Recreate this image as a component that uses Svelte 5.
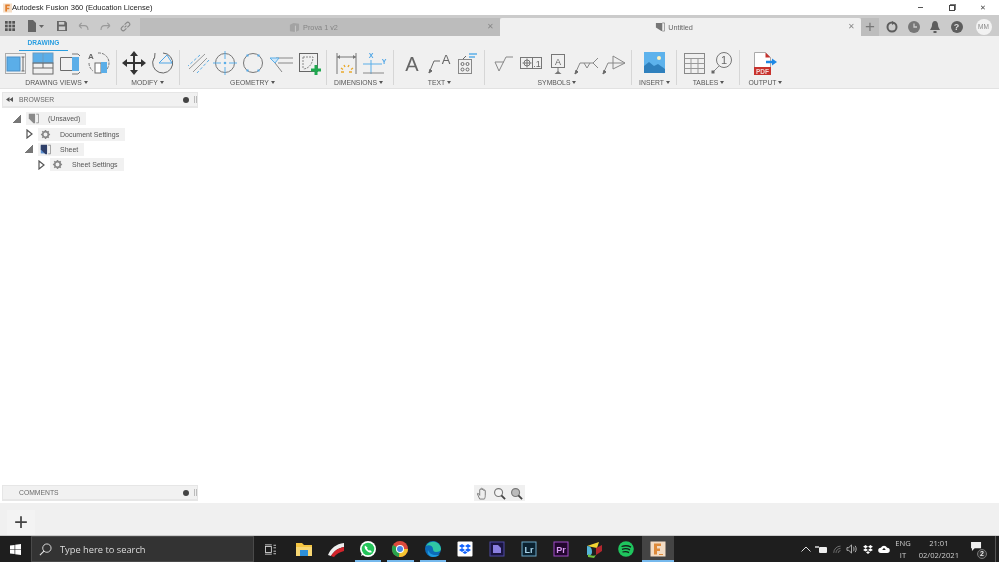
<script>
  const groups = [
    { label: 'DRAWING VIEWS', icons: ['base', 'proj', 'sect', 'detail'], cls: 'g-views' },
    { label: 'MODIFY', icons: ['move', 'rotate'], cls: 'g-modify' },
    { label: 'GEOMETRY', icons: ['center', 'cmark', 'circle', 'edge', 'sketch'], cls: 'g-geom' },
    { label: 'DIMENSIONS', icons: ['dim', 'ord'], cls: 'g-dim' },
    { label: 'TEXT', icons: ['a', 'leader', 'note'], cls: 'g-text' },
    { label: 'SYMBOLS', icons: ['surface', 'fcf', 'datum', 'weld', 'taper'], cls: 'g-sym' },
    { label: 'INSERT', icons: ['image'], cls: 'g-ins' },
    { label: 'TABLES', icons: ['table', 'balloon'], cls: 'g-tab' },
    { label: 'OUTPUT', icons: ['pdf'], cls: 'g-out' }
  ];
  const apps = ['folder', 'flag', 'whatsapp', 'chrome', 'edge', 'dropbox', 'inv', 'lr', 'pr', 'multi', 'spotify', 'fusion'];
  const running = ['whatsapp', 'chrome', 'edge'];
</script>

{#snippet gear()}
  <svg class="tree-ic" viewBox="0 0 14 14" width="11" height="11">
    <circle cx="7" cy="7" r="3.6" fill="none" stroke="#888" stroke-width="2.2"/>
    <path d="M7 1.200v2.200M7 10.600v2.200M1.200 7h2.200M10.600 7h2.200M2.900 2.900l1.600 1.600M9.500 9.500l1.600 1.600M2.900 11.100l1.600-1.600M9.500 4.500l1.600-1.600" stroke="#888" stroke-width="1.800"/>
  </svg>
{/snippet}

{#snippet docIcon(blue)}
  <svg class="tree-ic" viewBox="0 0 14 14" width="11" height="11">
    {#if blue}<rect x="1" y="2" width="6" height="10" fill="#5b8fd0"/>{/if}
    <path d="M1 1h7l1 0v12H7L1 7z" fill={blue ? '#30406a' : '#8a8a8a'}/>
    <path d="M10.500 1.500h3v11h-3" fill="none" stroke="#888" stroke-width="1"/>
  </svg>
{/snippet}

{#snippet closedTri()}
  <svg class="closed" viewBox="0 0 7 10" width="7" height="10"><path d="M1 1l5 4-5 4z" fill="#fff" stroke="#555" stroke-width="1.200"/></svg>
{/snippet}

{#snippet tool(n)}
  <svg class="tool" viewBox="0 0 28 28" width="28" height="28" fill="none" stroke="#6b6b6b" stroke-width="1">
    {#if n === 'base'}
      <rect x="4.500" y="4.500" width="20" height="20" stroke-dasharray="1 1" stroke="#666"/>
      <rect x="6" y="8" width="13" height="14" fill="#5baee8" stroke="#4a90c8"/>
      <path d="M22 8v14M20.500 8h3M20.500 22h3" stroke="#666"/>
    {:else if n === 'proj'}
      <rect x="4" y="4" width="20" height="10" fill="#5baee8" stroke="#6d9cc0"/>
      <path d="M14 4v10" stroke="#6d9cc0"/>
      <rect x="4" y="14" width="20" height="11"/>
      <path d="M4 19h20M14 14v5"/>
    {:else if n === 'sect'}
      <path d="M15 8.500H3.500v13H15"/>
      <rect x="15" y="8" width="7" height="14" fill="#5baee8" stroke="none"/>
      <path d="M15 5h6l2 2M15 25h6l2-2" stroke="#777"/>
    {:else if n === 'detail'}
      <text x="3" y="10" class="ic-a">A</text>
      <path d="M13 4a10 10 0 0 1 11 10 10 10 0 0 1-4 8M4 14a10 10 0 0 0 4 8" stroke="#777" stroke-dasharray="3 1"/>
      <rect x="10" y="14" width="6" height="10" fill="#fff"/>
      <rect x="16" y="13" width="6" height="11" fill="#5baee8" stroke="none"/>
    {:else if n === 'move'}
      <path d="M14 4v20M4 14h20" stroke="#333" stroke-width="2"/>
      <path d="M14 2l4 5h-8zM14 26l4-5h-8zM2 14l5-4v8zM26 14l-5-4v8z" fill="#333" stroke="none"/>
    {:else if n === 'rotate'}
      <path d="M15 4a10 10 0 1 1-9 5" stroke="#666"/>
      <path d="M7 4l-.5 5.500" stroke="#666"/>
      <path d="M11 14h13l-5-8z" stroke="#4ea5e6" fill="none"/>
    {:else if n === 'center'}
      <path d="M22 5L6 20M24 9L10 23" stroke="#999"/>
      <path d="M17 6L5 17M26 11L14 24" stroke="#5baee8" stroke-dasharray="3 2"/>
    {:else if n === 'cmark'}
      <circle cx="14" cy="14" r="9.500" stroke="#777"/>
      <path d="M14 2v8M14 18v8M2 14h8M18 14h8" stroke="#5baee8"/>
      <circle cx="14" cy="14" r="1.300" fill="#5baee8" stroke="none"/>
    {:else if n === 'circle'}
      <circle cx="14" cy="14" r="9.500" stroke="#777"/>
      <path d="M7.500 6.500h2M18.500 6.500h2M7.500 21.500h2M18.500 21.500h2" stroke="#4ea5e6" stroke-width="2"/>
    {:else if n === 'edge'}
      <path d="M9 9h17M11 14h15" stroke="#888"/>
      <path d="M3 9h9l-4 5z" fill="#cfe6f8" stroke="#5baee8"/>
      <path d="M8 14l7 9" stroke="#888"/>
    {:else if n === 'sketch'}
      <rect x="4.500" y="4.500" width="18" height="18" stroke="#666"/>
      <path d="M8 8v12M8 8h10c0 6-4 12-10 12" stroke="#888" stroke-dasharray="2 1"/>
      <path d="M21 16v10M16 21h10" stroke="#1fa84f" stroke-width="3"/>
    {:else if n === 'dim'}
      <path d="M5 4v21M24 4v21M5 8h19" stroke="#777"/>
      <path d="M5 8l3-2v4zM24 8l-3-2v4z" fill="#777" stroke="none"/>
      <path d="M9 19l2 1.500M19 20.500l2-1.500M12 16l1 2M17 16l-1 2M9 23h3M17 23h3" stroke="#e9a92c" stroke-width="1.400"/>
    {:else if n === 'ord'}
      <path d="M11 11v14M3 15h19" stroke="#5baee8"/>
      <path d="M3 24h21" stroke="#888"/>
      <text x="11" y="9" class="ic-xy">X</text>
      <text x="24" y="15" class="ic-xy">Y</text>
    {:else if n === 'a'}
      <text x="14" y="22" class="ic-big">A</text>
    {:else if n === 'leader'}
      <path d="M3 24L8 12h6" stroke="#666"/>
      <path d="M3 24l1-4 2 2z" fill="#666"/>
      <text x="20" y="15" class="ic-mid">A</text>
    {:else if n === 'note'}
      <rect x="4.500" y="10.500" width="13" height="14" stroke="#888"/>
      <circle cx="8.500" cy="15" r="1.500"/><circle cx="13.500" cy="15" r="1.500"/>
      <circle cx="8.500" cy="20.500" r="1.500"/><circle cx="13.500" cy="20.500" r="1.500"/>
      <path d="M15 5h8M15 8h6" stroke="#5baee8" stroke-width="1.500"/>
      <path d="M9 10l3-3" stroke="#666"/>
    {:else if n === 'surface'}
      <path d="M6 13h9M6 13l4 9 7-14h7" stroke="#888"/>
    {:else if n === 'fcf'}
      <rect x="3.500" y="8.500" width="21" height="11" stroke="#777"/>
      <path d="M15.500 8.500v11" stroke="#777"/>
      <circle cx="10" cy="14" r="3" stroke="#777"/>
      <path d="M5.500 14h9M10 9.500v9" stroke="#777"/>
      <text x="20" y="17.500" class="ic-sm">.1</text>
    {:else if n === 'datum'}
      <rect x="6.500" y="5.500" width="13" height="13" stroke="#777"/>
      <text x="13" y="16" class="ic-sm">A</text>
      <path d="M13 18v5" stroke="#777"/>
      <path d="M9.500 25h7l-3.500-3z" fill="#777" stroke="none"/>
    {:else if n === 'weld'}
      <path d="M2 25L7 14h13l5-5M20 14l5 5" stroke="#888"/>
      <path d="M2 25l1-4 2 2z" fill="#666"/>
      <path d="M11 14l3 5 3-5" stroke="#888"/>
    {:else if n === 'taper'}
      <path d="M2 25L7 14h17" stroke="#888"/>
      <path d="M2 25l1-4 2 2z" fill="#666"/>
      <path d="M12 7l12 7-12 6z" stroke="#888"/>
    {:else if n === 'image'}
      <rect x="3" y="3" width="21" height="21" fill="#5db2ec" stroke="none"/>
      <path d="M3 24v-7l5-4 5 4 4-2 7 5v4z" fill="#2f80bd" stroke="none"/>
      <circle cx="18" cy="9" r="2" fill="#fff2bf" stroke="none"/>
    {:else if n === 'table'}
      <rect x="4.500" y="4.500" width="20" height="20" stroke="#888"/>
      <path d="M4.500 9.500h20M4.500 14.500h20M4.500 19.500h20M11 9.500v15M18 9.500v15" stroke="#999"/>
    {:else if n === 'balloon'}
      <circle cx="16" cy="11" r="7.500" stroke="#777"/>
      <text x="16" y="15" class="ic-one">1</text>
      <path d="M5 23l6-6" stroke="#888"/>
      <rect x="3.500" y="21.500" width="3" height="3" fill="#666" stroke="none"/>
    {:else if n === 'pdf'}
      <path d="M3.500 3.500h11l5 5v17h-16z" fill="#fff" stroke="#aaa"/>
      <path d="M14.500 3.500l5 5h-5z" fill="#c8332e" stroke="none"/>
      <rect x="3" y="18" width="17" height="8" fill="#c8332e" stroke="none"/>
      <text x="11.500" y="24.500" class="ic-pdf">PDF</text>
      <path d="M15 13h7" stroke="#1e88e5" stroke-width="2.500"/>
      <path d="M21 9.500l5 3.500-5 3.500z" fill="#1e88e5" stroke="none"/>
    {/if}
  </svg>
{/snippet}

{#snippet app(n)}
  <svg viewBox="0 0 20 20" width="20" height="20">
    {#if n === 'folder'}
      <path d="M2 4h6l2 2h8v11H2z" fill="#f4c542"/>
      <rect x="2" y="8" width="16" height="9" fill="#f7d774"/>
      <rect x="6" y="11" width="8" height="6" fill="#2d8fd9"/>
    {:else if n === 'flag'}
      <path d="M2 16C5 9 10 5 18 4v4c-6 1-10 4-13 9z" fill="#eee"/>
      <path d="M5 17c3-5 7-8 13-9v4c-4 1-8 3-10 6z" fill="#d3242b"/>
    {:else if n === 'whatsapp'}
      <circle cx="10" cy="10" r="8" fill="#fff"/>
      <path d="M3 17l1.500-4.500L7 15z" fill="#fff"/>
      <circle cx="10" cy="10" r="6.300" fill="#25c45a"/>
      <path d="M7 6.500c-1 1.500 0 4 2 5.500s3.500 2.200 5 1l-2-2-1 .7-2-2 .6-1z" fill="#fff"/>
    {:else if n === 'chrome'}
      <circle cx="10" cy="10" r="8" fill="#dd4a3d"/>
      <path d="M10 10L3 6a8 8 0 0 0 6 12z" fill="#28a24b"/>
      <path d="M10 10h8a8 8 0 0 1-9 8z" fill="#f4c430"/>
      <circle cx="10" cy="10" r="4" fill="#fff"/>
      <circle cx="10" cy="10" r="3" fill="#4a86e8"/>
    {:else if n === 'edge'}
      <circle cx="10" cy="10" r="8" fill="#0c6bb8"/>
      <path d="M3 7c3-6 14-6 15 3 0 2-2 3-5 3-2 0-3-1-3-3 0-3-4-5-7-3z" fill="#2fc7a4"/>
      <path d="M10 18c-4 0-6-4-5-7 1 3 4 5 8 5 2 0 3 0 4-1-1 2-4 3-7 3z" fill="#1d9be0"/>
    {:else if n === 'dropbox'}
      <rect x="2.500" y="2.500" width="15" height="15" rx="1" fill="#fff"/>
      <path d="M7 5l3 2-3 2-3-2zM13 5l3 2-3 2-3-2zM7 9l3 2-3 2-3-2zM13 9l3 2-3 2-3-2zM7.500 13.500l2.500-1.500 2.500 1.500-2.500 1.500z" fill="#0f62fe"/>
    {:else if n === 'inv'}
      <rect x="3" y="3" width="14" height="14" fill="#1a1440" stroke="#4e4aa8" stroke-width="1"/>
      <path d="M6 6h5l3 3v5H6z" fill="#8a7fe0"/>
    {:else if n === 'lr'}
      <rect x="3" y="3" width="14" height="14" fill="#0b2230" stroke="#6aa7c8" stroke-width="1"/>
      <text x="10" y="14" class="ic-app lr">Lr</text>
    {:else if n === 'pr'}
      <rect x="3" y="3" width="14" height="14" fill="#22062e" stroke="#a04bc8" stroke-width="1"/>
      <text x="10" y="14" class="ic-app pr">Pr</text>
    {:else if n === 'multi'}
      <path d="M3 7l12-4-2 6z" fill="#f1d432"/>
      <path d="M12 9l6-3v6l-6 4z" fill="#b3262e"/>
      <path d="M3 7c4 0 5 3 5 6s-2 4-5 3z" fill="#55b5d8"/>
      <path d="M4 15c3 2 6 2 8 1l-2 3-6-1z" fill="#6fbf3f"/>
    {:else if n === 'spotify'}
      <circle cx="10" cy="10" r="7.800" fill="#1fc65e"/>
      <path d="M5.500 7.500c3-1 7-.8 9.500.6M6 10.300c2.500-.8 6-.6 8 .6M6.500 13c2-.6 5-.4 6.500.6" stroke="#12201a" stroke-width="1.300" fill="none"/>
    {:else if n === 'fusion'}
      <rect x="2.500" y="2.500" width="15" height="15" fill="#f3dcc4"/>
      <path d="M6 4.500h7v2.500H9v2.500h3v2.500H9v3.500H6z" fill="#de8a3a"/>
      <path d="M11 15.500h4" stroke="#de8a3a"/>
    {/if}
  </svg>
{/snippet}

<div class="page">
  <header class="title">
    <svg viewBox="0 0 10 10" width="9" height="10" class="f-logo">
      <rect width="10" height="10" fill="#f6dfc8"/>
      <path d="M2.500 1h5v2H4.500v1.700h2.500v1.800H4.500V9h-2z" fill="#e27f2d"/>
    </svg>
    <span class="title-text">Autodesk Fusion 360 (Education License)</span>
    <div class="win-btns">
      <span class="wb"><i class="min"></i></span>
      <span class="wb"><i class="rest"></i></span>
      <span class="wb x">✕</span>
    </div>
  </header>

  <div class="tabbar">
    <div class="quick">
      <svg viewBox="0 0 11 11" width="10" height="10" class="grid9">
        {#each [0, 4, 8] as y}{#each [0, 4, 8] as x}<rect x={x} y={y} width="3" height="3" fill="#555"/>{/each}{/each}
      </svg>
      <svg viewBox="0 0 18 12" width="18" height="12" class="q-file">
        <path d="M1 0h5l3 3v9H1z" fill="#666"/><path d="M12 5h5l-2.500 3z" fill="#666"/>
      </svg>
      <svg viewBox="0 0 11 11" width="10" height="10" class="q-save">
        <path d="M0 0h9l2 2v9H0z" fill="#666"/><rect x="2" y="1" width="6" height="3" fill="#cfcfcf"/><rect x="2" y="6" width="7" height="4" fill="#cfcfcf"/>
      </svg>
      <svg viewBox="0 0 12 10" width="11" height="9" class="q-undo">
        <path d="M1 4h6c3 0 4 2 4 5M1 4l3-3M1 4l3 3" fill="none" stroke="#999" stroke-width="1.200"/>
      </svg>
      <svg viewBox="0 0 12 10" width="11" height="9" class="q-redo">
        <path d="M11 4H5C2 4 1 6 1 9M11 4L8 1M11 4L8 7" fill="none" stroke="#999" stroke-width="1.200"/>
      </svg>
      <svg viewBox="0 0 12 12" width="11" height="11" class="q-link">
        <path d="M5 7l2-2M4 5L2 7c-1 1-1 2 0 3s2 1 3 0l2-2M8 7l2-2c1-1 1-2 0-3S8 1 7 2L5 4" fill="none" stroke="#888" stroke-width="1.200"/>
      </svg>
    </div>
    <div class="tab inactive">
      <span class="tab-label">
        <svg viewBox="0 0 12 12" width="11" height="11"><path d="M1 3l4-2 6 1v7l-4 2-6-1z" fill="#a3a3a3"/><path d="M7 4v7" stroke="#ccc"/></svg>
        Prova 1 v2
      </span>
      <span class="tab-x">✕</span>
    </div>
    <div class="tab active">
      <span class="tab-label">
        <svg viewBox="0 0 11 11" width="10" height="10"><path d="M1 1h6l1 0v9H7L1 6z" fill="#777"/><path d="M8 1h2.500v9H8" fill="none" stroke="#777" stroke-width=".7"/></svg>
        Untitled
      </span>
      <span class="tab-x">✕</span>
    </div>
    <div class="tab-tools">
      <span class="plus">+</span>
      <svg viewBox="0 0 12 12" width="12" height="12"><circle cx="6" cy="6" r="4.500" fill="none" stroke="#5d5d5d" stroke-width="2"/><path d="M6 0l3 2-3 2z" fill="#5d5d5d"/></svg>
      <svg viewBox="0 0 12 12" width="12" height="12"><circle cx="6" cy="6" r="6" fill="#777"/><path d="M6 2.500V6h3" fill="none" stroke="#ccc" stroke-width="1.300"/></svg>
      <svg viewBox="0 0 12 12" width="12" height="12"><path d="M6 0c2 0 3 2 3 4s1 3 2 5H1c1-2 2-3 2-5s1-4 3-4z" fill="#5d5d5d"/><rect x="4.500" y="10" width="3" height="2" fill="#5d5d5d"/></svg>
      <span class="help">?</span>
      <span class="avatar">MM</span>
    </div>
  </div>

  <div class="ribbon">
    <div class="ws-tab"><span>DRAWING</span></div>
    <div class="groups">
      {#each groups as g}
        <section class="group {g.cls}">
          <div class="icons">
            {#each g.icons as ic}{@render tool(ic)}{/each}
          </div>
          <div class="g-label">{g.label}<i class="caret"></i></div>
        </section>
      {/each}
    </div>
  </div>

  <main class="main">
    <div class="panel">
      <svg viewBox="0 0 7 5" width="7" height="5" class="collapse"><path d="M3.500 0v5L0 2.500zM7 0v5L3.500 2.500z" fill="#555"/></svg>
      <span class="panel-title">BROWSER</span>
      <span class="dot"></span><span class="grip"></span>
    </div>
    <ul class="tree">
      <li class="lv0">
        <i class="open"></i>
        <span class="chip">{@render docIcon(false)}<span class="lbl">(Unsaved)</span></span>
      </li>
      <li class="lv1">
        {@render closedTri()}
        <span class="chip">{@render gear()}<span class="lbl">Document Settings</span></span>
      </li>
      <li class="lv1">
        <i class="open"></i>
        <span class="chip">{@render docIcon(true)}<span class="lbl">Sheet</span></span>
      </li>
      <li class="lv2">
        {@render closedTri()}
        <span class="chip">{@render gear()}<span class="lbl">Sheet Settings</span></span>
      </li>
    </ul>
    <div class="bottom">
      <div class="panel comments">
        <span class="panel-title">COMMENTS</span>
        <span class="dot"></span><span class="grip"></span>
      </div>
      <div class="nav">
        <svg viewBox="0 0 14 14" width="13" height="13"><path d="M4 13L1.500 7.500c0-1 1-1 1.500 0L4 9V3c0-1 1.500-1 1.500 0V2c0-1 1.500-1 1.500 0v1c0-1 1.500-1 1.500 0v1c0-1 1.500-1 1.500 0v5c0 2-.5 3-1 4z" fill="#eee" stroke="#777"/></svg>
        <svg viewBox="0 0 14 14" width="13" height="13"><circle cx="6" cy="6" r="4.300" fill="#f4f4f4" stroke="#777" stroke-width="1.200"/><path d="M9 9l4 4" stroke="#444" stroke-width="2"/></svg>
        <svg viewBox="0 0 14 14" width="13" height="13"><circle cx="6" cy="6" r="4.300" fill="#bbb" stroke="#777" stroke-width="1.200"/><path d="M9 9l4 4" stroke="#444" stroke-width="2"/></svg>
      </div>
      <span></span>
    </div>
  </main>

  <div class="statusbar">
    <span class="add">+</span>
  </div>

  <footer class="taskbar">
    <span class="start">
      <svg viewBox="0 0 12 12" width="11" height="11"><path d="M0 1.700l5-.7v4.600H0zM5.700 .9L12 0v5.600H5.700zM0 6.300h5V11l-5-.7zM5.700 6.300H12V12l-6.300-.9z" fill="#fff"/></svg>
    </span>
    <div class="search">
      <svg viewBox="0 0 14 14" width="13" height="13"><circle cx="8.500" cy="5.500" r="4.500" fill="none" stroke="#e4e4e4"/><path d="M5.300 8.700L1 13" stroke="#e4e4e4" stroke-width="1.200"/></svg>
      <span>Type here to search</span>
    </div>
    <span class="tv">
      <svg viewBox="0 0 13 12" width="11" height="11"><rect x=".5" y="2.500" width="7" height="7" fill="none" stroke="#ddd"/><path d="M0 .5h8M0 11.500h8M10 1h3M10 4h3M10 8h3M10 11h3" stroke="#ddd"/></svg>
    </span>
    <div class="apps">
      {#each apps as a}
        <span class="app" class:run={running.includes(a)} class:cur={a === 'fusion'}>{@render app(a)}</span>
      {/each}
    </div>
    <div class="tray">
      <svg class="t-caret" viewBox="0 0 10 6" width="10" height="6"><path d="M.5 5.500L5 1l4.500 4.500" fill="none" stroke="#ddd"/></svg>
      <svg class="t-batt" viewBox="0 0 12 9" width="12" height="9"><rect x="4" y="2" width="8" height="6" rx="1" fill="#eee"/><path d="M0 1h4v2H0z" fill="#aaa"/></svg>
      <svg class="t-wifi" viewBox="0 0 12 11" width="9" height="9"><path d="M1 10a9 9 0 0 1 9-9M4 10a6 6 0 0 1 6-6M7 10a3 3 0 0 1 3-3" fill="none" stroke="#888"/></svg>
      <svg class="t-vol" viewBox="0 0 12 11" width="11" height="10"><path d="M1 4h2l3-3v9L3 7H1zM8 3c1 1 1 4 0 5M10 2c1.500 2 1.500 5 0 7" fill="none" stroke="#bbb"/></svg>
      <svg class="t-drop" viewBox="0 0 12 11" width="10" height="9"><path d="M3 0l3 2-3 2-3-2zM9 0l3 2-3 2-3-2zM3 4l3 2-3 2-3-2zM9 4l3 2-3 2-3-2zM3.500 9l2.500-1.500L8.500 9 6 11z" fill="#fff"/></svg>
      <svg class="t-cloud" viewBox="0 0 13 9" width="12" height="8"><path d="M3 9a3 3 0 0 1 0-6 4 4 0 0 1 7 0 3 3 0 0 1 0 6z" fill="#fff"/><path d="M6.500 3L4.500 5.500h4z" fill="#1f1f1f"/></svg>
      <div class="lang"><span>ENG</span><span>IT</span></div>
      <div class="clock"><span>21:01</span><span>02/02/2021</span></div>
      <span class="notif">
        <svg viewBox="0 0 12 11" width="11" height="10"><path d="M0 0h11v7H4L1 10V7H0z" fill="#eee"/></svg>
        <b>2</b>
      </span>
      <i class="desk"></i>
    </div>
  </footer>
</div>

<style>
  :global(body) { margin: 0; background: #fff; }
  .page {
    width: 999px; height: 562px; display: flex; flex-direction: column; overflow: hidden;
    font-family: "Liberation Sans", Arial, sans-serif; color: #666; filter: blur(.3px);
  }
  svg { display: block; flex: none; }

  .title { height: 15px; display: flex; align-items: center; background: #fff; padding-left: 3px; }
  .title-text { font-size: 7.600px; color: #222; white-space: nowrap; }
  .win-btns { margin-left: auto; display: flex; }
  .wb { width: 31.500px; height: 15px; display: flex; align-items: center; justify-content: center; font-size: 7px; color: #444; }
  .min { width: 5px; height: 1px; background: #555; display: block; }
  .rest { width: 4px; height: 4px; border: 1px solid #444; display: block; box-shadow: 1px -1px 0 #777; }

  .tabbar { height: 21px; display: flex; background: #cbcbcb; box-sizing: border-box; padding-top: 3px; }
  .quick { width: 140px; flex: none; display: flex; align-items: center; margin-top: -3px; padding-top: 1px; box-sizing: border-box; }
  .grid9 { margin-left: 5px; }
  .q-file { margin-left: 12px; }
  .q-save { margin-left: 12px; }
  .q-undo { margin-left: 11px; }
  .q-redo { margin-left: 11px; }
  .q-link { margin-left: 9px; }
  .tab { display: flex; align-items: center; position: relative; box-sizing: border-box; justify-content: center; font-size: 7.300px; }
  .tab.inactive { width: 360px; background: #bcbcbc; color: #858585; }
  .tab.active { width: 361px; background: #f0f0f0; color: #666; border-radius: 2px 2px 0 0; }
  .tab-label { display: flex; align-items: center; gap: 3px; }
  .inactive .tab-label { margin-right: 13px; }
  .active .tab-label { margin-right: 13px; }
  .tab-x { position: absolute; right: 6px; top: 4px; font-size: 8px; color: #888; }
  .tab-tools { flex: 1; display: flex; align-items: center; margin-top: -1px; }
  .plus { width: 18px; height: 18px; background: #bdbdbd; color: #777; font-size: 17px; line-height: 17px; text-align: center; margin-right: 7px; }
  .tab-tools svg { margin-right: 9.500px; }
  .help { width: 12px; height: 12px; border-radius: 50%; background: #5d5d5d; color: #ddd; font-size: 9px; line-height: 12px; text-align: center; font-weight: 700; }
  .avatar { width: 16px; height: 16px; border-radius: 50%; background: #f2f2f2; color: #888; font-size: 6.500px; line-height: 16px; text-align: center; margin-left: 13px; }

  .ribbon { height: 53px; background: #f0f0f0; box-sizing: border-box; border-bottom: 1px solid #e2e2e2; display: flex; flex-direction: column; }
  .ws-tab { height: 15px; padding-left: 19px; box-sizing: border-box; }
  .ws-tab span { display: block; width: 49px; height: 15px; box-sizing: border-box; border-bottom: 1px solid #2a9ee0; color: #2a9ee0; text-align: center; font-size: 6.600px; font-weight: 700; line-height: 14px; }
  .groups { display: flex; height: 35px; margin-top: -2px; padding-left: 1px; }
  .group { display: flex; flex-direction: column; align-items: center; position: relative; }
  .group:not(:last-child)::after { content: ""; position: absolute; right: 0; top: 1px; bottom: -1px; width: 1px; background: #d6d6d6; }
  .icons { display: flex; height: 28px; }
  .g-label { font-size: 6.800px; color: #555; line-height: 9px; margin-top: 1px; white-space: nowrap; display: flex; align-items: center; }
  .caret { width: 0; height: 0; border: 2px solid transparent; border-top: 3px solid #555; border-bottom: 0; margin-left: 2px; }
  .g-views { width: 116px; }
  .g-modify { width: 63px; }
  .g-geom { width: 147px; }
  .g-dim { width: 67px; }
  .g-text { width: 91px; }
  .g-sym { width: 147px; }
  .g-ins { width: 45px; }
  .g-tab { width: 63px; }
  .g-out { width: 56px; }
  .g-views .icons { margin-right: 4px; }
  .g-views .g-label { margin-right: 5px; }
  .g-modify .icons, .g-modify .g-label, .g-geom .icons, .g-geom .g-label, .g-tab .icons { margin-right: 2px; }
  .g-dim .icons { margin-right: 1px; }
  .g-dim .g-label { margin-right: 4px; }
  .g-sym .g-label { margin-right: 3px; }
  .g-out .icons { margin-right: 7px; }
  .g-out .g-label { margin-right: 5px; }

  .ic-a { font: 700 8px "Liberation Sans", sans-serif; fill: #666; stroke: none; }
  .ic-xy { font: 700 7px "Liberation Sans", sans-serif; fill: #4ea5e6; stroke: none; text-anchor: middle; }
  .ic-big { font: 400 20px "Liberation Sans", sans-serif; fill: #666; stroke: none; text-anchor: middle; }
  .ic-mid { font: 400 13px "Liberation Sans", sans-serif; fill: #666; stroke: none; text-anchor: middle; }
  .ic-sm { font: 400 9px "Liberation Sans", sans-serif; fill: #666; stroke: none; text-anchor: middle; }
  .ic-one { font: 400 11px "Liberation Sans", sans-serif; fill: #666; stroke: none; text-anchor: middle; }
  .ic-pdf { font: 700 6.500px "Liberation Sans", sans-serif; fill: #f4d7d5; stroke: none; text-anchor: middle; }
  .ic-app { font: 700 9px "Liberation Sans", sans-serif; stroke: none; text-anchor: middle; }
  .lr { fill: #a9d4ea; }
  .pr { fill: #d99bf2; }

  .main { flex: 1; display: flex; flex-direction: column; min-height: 0; padding-top: 3px; background: #fff; }
  .panel { width: 196px; height: 16px; margin-left: 2px; flex: none; box-sizing: border-box; background: #f1f1f1; border: 1px solid #e6e6e6; border-bottom-width: 2px; display: flex; align-items: center; font-size: 6.800px; color: #6a6a6a; }
  .collapse { margin-left: 3px; margin-right: 6px; }
  .comments .panel-title { margin-left: 16px; }
  .dot { margin-left: auto; width: 6px; height: 6px; border-radius: 50%; background: #444; }
  .grip { width: 1px; height: 7px; border-left: 1px solid #bbb; border-right: 1px solid #bbb; margin: 0 0 0 5px; }

  .tree { list-style: none; margin: 3px 0 0; padding: 0; font-size: 7px; color: #555; }
  .tree li { height: 15.400px; display: flex; align-items: center; }
  .lv0 { padding-left: 13px; }
  .lv1 { padding-left: 25px; }
  .lv2 { padding-left: 37px; }
  .open { display: block; width: 8px; height: 8px; background: linear-gradient(135deg, transparent 50%, #777 50%); margin-right: 5px; }
  .closed { margin-right: 5px; margin-left: 1px; }
  .chip { background: #f1f1f1; height: 13px; display: flex; align-items: center; padding: 0 6px 0 2px; }
  .lbl { margin-left: 9px; }

  .bottom { margin-top: auto; display: grid; grid-template-columns: 1fr auto 1fr; align-items: end; height: 16px; margin-bottom: 2px; }
  .nav { width: 51px; height: 16px; background: #f0f0f0; display: flex; align-items: center; justify-content: center; gap: 4px; }

  .statusbar { height: 33px; flex: none; background: #f0f0f0; display: flex; align-items: flex-end; border-bottom: 1px solid #ccc; box-sizing: border-box; }
  .add { margin-left: 7px; width: 28px; height: 25px; background: #f3f3f3; color: #444; font: 400 24px/23px "Liberation Sans", sans-serif; text-align: center; }

  .taskbar { height: 26px; flex: none; background: #1e1e1e; display: flex; align-items: center; color: #ddd; }
  .start { width: 31px; display: flex; justify-content: center; }
  .search { width: 223px; height: 26px; box-sizing: border-box; background: #333; border: 1px solid #4a4a4a; display: flex; align-items: center; padding-left: 7px; gap: 8px; font-family: "Open Sans", sans-serif; font-size: 9.300px; color: #ddd; }
  .tv { width: 32px; display: flex; justify-content: center; }
  .apps { display: flex; margin-left: 1.800px; }
  .app { width: 32.200px; height: 26px; box-sizing: border-box; display: flex; align-items: center; justify-content: center; position: relative; }
  .app.run::after { content: ""; position: absolute; left: 3px; right: 3px; bottom: 0; height: 2px; background: #76b9ed; }
  .app.cur { background: #444; }
  .app.cur::after { content: ""; position: absolute; left: 0; right: 0; bottom: 0; height: 2px; background: #76b9ed; }
  .tray { margin-left: auto; display: flex; align-items: center; padding-right: 3px; }
  .t-batt { margin-left: 4px; }
  .t-wifi { margin-left: 6px; }
  .t-vol { margin-left: 4px; }
  .t-drop { margin-left: 6px; }
  .t-cloud { margin-left: 5px; }
  .lang, .clock { display: flex; flex-direction: column; align-items: center; font-size: 7.600px; line-height: 12px; color: #ccc; font-family: "Open Sans", sans-serif; }
  .lang { margin-left: 5px; }
  .clock { margin-left: 8px; }
  .notif { position: relative; margin-left: 12px; width: 15px; height: 15px; }
  .notif b { position: absolute; right: -1px; bottom: -2px; width: 10px; height: 10px; border-radius: 50%; background: #333; border: 1px solid #777; box-sizing: border-box; font-size: 7px; line-height: 8px; text-align: center; font-weight: 700; color: #eee; }
  .desk { display: block; width: 1px; height: 26px; background: #555; margin-left: 9px; }
</style>
